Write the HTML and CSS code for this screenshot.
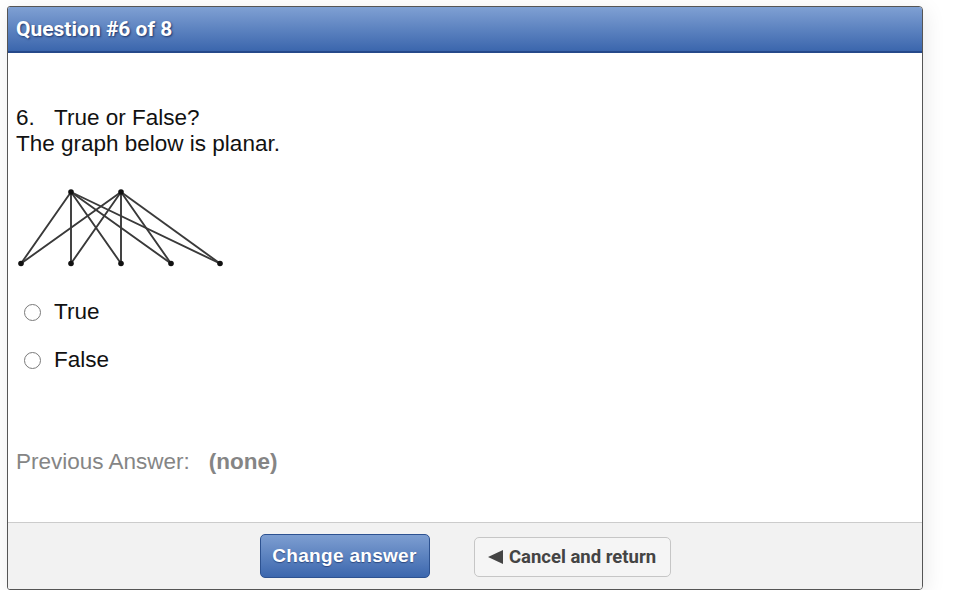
FILE: index.html
```html
<!DOCTYPE html>
<html>
<head>
<meta charset="utf-8">
<link rel="stylesheet" href="styles.css">
</head>
<body>
<div class="dialog">
  <div class="header"><span class="title">Question #6 of 8</span></div>
  <div class="content">
    <div class="question">
      <div><span class="num">6.</span>True or False?</div>
      <div>The graph below is planar.</div>
    </div>
    <svg class="graph" width="220" height="90" viewBox="0 0 220 90">
      <g stroke="#3a3a3a" stroke-width="1.9" stroke-linecap="round">
        <line x1="55" y1="11" x2="5" y2="82.5"/>
        <line x1="55" y1="11" x2="55" y2="82.5"/>
        <line x1="55" y1="11" x2="105" y2="82.5"/>
        <line x1="55" y1="11" x2="155" y2="82.5"/>
        <line x1="55" y1="11" x2="204" y2="82.5"/>
        <line x1="105" y1="11" x2="5" y2="82.5"/>
        <line x1="105" y1="11" x2="55" y2="82.5"/>
        <line x1="105" y1="11" x2="105" y2="82.5"/>
        <line x1="105" y1="11" x2="155" y2="82.5"/>
        <line x1="105" y1="11" x2="204" y2="82.5"/>
      </g>
      <g fill="#111">
        <circle cx="55" cy="11" r="2.8"/>
        <circle cx="105" cy="11" r="2.8"/>
        <circle cx="5" cy="82.5" r="2.8"/>
        <circle cx="55" cy="82.5" r="2.8"/>
        <circle cx="105" cy="82.5" r="2.8"/>
        <circle cx="155" cy="82.5" r="2.8"/>
        <circle cx="204" cy="82.5" r="2.8"/>
      </g>
    </svg>
    <div class="options">
      <label class="option"><span class="radio"></span>True</label>
      <label class="option"><span class="radio"></span>False</label>
    </div>
    <div class="previous"><span class="prev-label">Previous Answer:</span><span class="prev-value">(none)</span></div>
  </div>
  <div class="footer">
    <button class="btn-primary">Change answer</button>
    <button class="btn-secondary"><span class="tri"></span>Cancel and return</button>
  </div>
</div>
</body>
</html>
```
FILE: styles.css
```css
html, body {
  margin: 0;
  padding: 0;
  background: #ffffff;
}
body {
  padding: 6px 0 0 7px;
  font-family: "Liberation Sans", Arial, sans-serif;
}
.dialog {
  width: 914px;
  height: 582px;
  border: 1px solid #555;
  border-radius: 3px 4px 4px 3px;
  background: #fff;
  display: flex;
  flex-direction: column;
  box-shadow: 2px 4px 22px rgba(0, 0, 0, 0.09);
  overflow: hidden;
}
.header {
  height: 44px;
  flex: none;
  background: linear-gradient(#7fa0d3, #3b66ad);
  border-bottom: 2px solid #26498a;
  display: flex;
  align-items: center;
  padding-left: 8px;
}
.title {
  font-family: Roboto, "Liberation Sans", sans-serif;
  font-weight: bold;
  font-size: 21px;
  color: #fff;
  text-shadow: 1px 1px 2px rgba(20, 40, 90, 0.85);
  margin-top: -1px;
}
.content {
  flex: 1;
  padding: 52px 8px 0 8px;
  color: #111;
  font-size: 22.5px;
  line-height: 26px;
}
.num {
  display: inline-block;
  width: 38px;
}
.graph {
  display: block;
  margin-top: 24px;
}
.options {
  display: flex;
  flex-direction: column;
  gap: 24px;
  margin-top: 29px;
}
.option {
  display: flex;
  align-items: center;
  height: 24px;
  line-height: 24px;
}
.radio {
  width: 17px;
  height: 17px;
  border: 1px solid #7a7a7a;
  border-radius: 50%;
  background: #fff;
  margin-left: 8px;
  margin-right: 13px;
  box-sizing: border-box;
}
.previous {
  margin-top: 77px;
  color: #858585;
}
.prev-value {
  font-weight: bold;
  margin-left: 19px;
}
.footer {
  flex: none;
  height: 66px;
  border-top: 1px solid #ccc;
  background: #f2f2f2;
  display: flex;
  align-items: center;
  justify-content: center;
  gap: 44px;
}
.btn-primary {
  width: 170px;
  height: 44px;
  border: 1px solid #2d5291;
  border-radius: 5px;
  background: linear-gradient(#7d9ed1, #3c67ae);
  color: #fff;
  font-family: "Liberation Sans", Arial, sans-serif;
  font-weight: bold;
  font-size: 19px;
  letter-spacing: 0.3px;
  text-shadow: 0 1px 1px rgba(20, 40, 90, 0.6);
  padding: 0;
}
.btn-secondary {
  width: 197px;
  height: 40px;
  border: 1px solid #c6c6c6;
  border-radius: 5px;
  background: #f5f5f5;
  color: #444;
  font-family: Roboto, "Liberation Sans", sans-serif;
  font-weight: bold;
  font-size: 18.5px;
  white-space: nowrap;
  display: flex;
  align-items: center;
  justify-content: center;
  padding: 0;
  margin-top: 2px;
}
.tri {
  width: 0;
  height: 0;
  border-top: 7px solid transparent;
  border-bottom: 7px solid transparent;
  border-right: 15px solid #444;
  margin-right: 6px;
}
```
